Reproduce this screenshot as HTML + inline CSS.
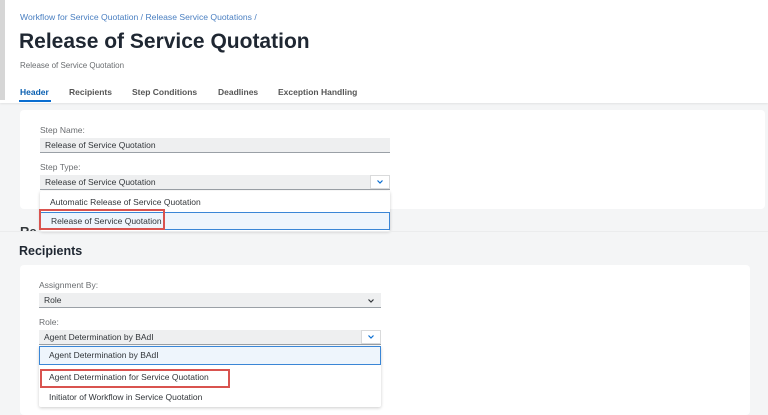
<!DOCTYPE html>
<html><head><style>
*{box-sizing:border-box;margin:0;padding:0}
body{width:768px;height:409px;overflow:hidden;background:#f4f5f6;font-family:"Liberation Sans",sans-serif;position:relative;color:#32363a}
.a{position:absolute}
.lbl{font-size:8.5px;color:#6a6d70;line-height:10px}
.inp{background:#eeeff0;border-bottom:1px solid #9aa0a6;font-size:8.5px;padding-left:5px;line-height:15px;color:#32363a}
.chev{position:absolute;right:0;top:0;width:20px;height:100%;background:#fff;border:1px solid #d9dadb}
.chev svg,.ch svg{position:absolute;left:50%;top:50%;margin:-2px 0 0 -3px}
.item{font-size:8.5px;color:#32363a;position:absolute;left:0;right:0;padding-left:10px}
.red{position:absolute;z-index:5;box-shadow:inset 0 0 0 2px #d9534f;background:transparent}
</style></head><body>
<div class="a" style="left:0;top:0;width:768px;height:103px;background:#fff;box-shadow:0 1px 2px rgba(0,0,0,.08)"></div>
<div class="a" style="left:0;top:0;width:5px;height:100px;background:#d6d6d6"></div>
<div class="a" style="left:20px;top:12px;font-size:8.6px;color:#4a7fc1">Workflow for Service Quotation / Release Service Quotations /</div>
<div class="a" style="left:19px;top:30px;font-size:21px;font-weight:bold;color:#1f2732">Release of Service Quotation</div>
<div class="a" style="left:20px;top:61px;font-size:8px;color:#6a6d70">Release of Service Quotation</div>
<div class="a" style="left:20px;top:87px;font-size:8.5px;font-weight:bold;color:#555">
<span class="a" style="left:0;color:#0a5fb0">Header</span><span class="a" style="left:49px;white-space:nowrap">Recipients</span><span class="a" style="left:112px;white-space:nowrap">Step Conditions</span><span class="a" style="left:198px">Deadlines</span><span class="a" style="left:258px;white-space:nowrap">Exception Handling</span></div>
<div class="a" style="left:19px;top:100px;width:32px;height:2px;background:#0a6ed1"></div>

<div class="a" style="left:20px;top:110px;width:745px;height:99px;background:#fff;border-radius:4px"></div>
<div class="a lbl" style="left:40px;top:125px">Step Name:</div>
<div class="a inp" style="left:40px;top:138px;width:350px;height:15px">Release of Service Quotation</div>
<div class="a lbl" style="left:40px;top:162px">Step Type:</div>
<div class="a inp" style="left:40px;top:175px;width:350px;height:15px">Release of Service Quotation<div class="chev"><svg width="6" height="4"><path d="M0.5 0.5L3 3L5.5 0.5" stroke="#0a6ed1" fill="none" stroke-width="1.2"/></svg></div></div>
<div class="a" style="left:40px;top:191px;width:350px;height:40px;background:#fff;box-shadow:0 1px 3px rgba(0,0,0,.2);border-radius:2px">
<div class="item" style="top:6px">Automatic Release of Service Quotation</div>
<div class="item" style="top:21px;height:18px;line-height:16px;border:1px solid #3a86d6;background:#eef5fc">Release of Service Quotation</div>
</div>
<div class="red" style="left:39px;top:209px;width:126px;height:21px"></div>
<div class="a" style="left:20px;top:224px;font-size:13px;font-weight:bold;color:#32363a;height:7px;overflow:hidden">Re</div>
<div class="a" style="left:0;top:231px;width:768px;height:1px;background:#ebeced"></div>

<div class="a" style="left:19px;top:244px;font-size:12.5px;font-weight:bold;color:#1f2732">Recipients</div>
<div class="a" style="left:20px;top:265px;width:730px;height:150px;background:#fff;border-radius:4px"></div>
<div class="a lbl" style="left:39px;top:280px">Assignment By:</div>
<div class="a inp" style="left:39px;top:293px;width:342px;height:15px">Role<span class="ch" style="position:absolute;right:0;top:0;width:20px;height:15px"><svg width="6" height="4"><path d="M0.5 0.5L3 3L5.5 0.5" stroke="#32363a" fill="none" stroke-width="1.2"/></svg></span></div>
<div class="a lbl" style="left:39px;top:317px">Role:</div>
<div class="a inp" style="left:39px;top:330px;width:342px;height:15px">Agent Determination by BAdI<div class="chev"><svg width="6" height="4"><path d="M0.5 0.5L3 3L5.5 0.5" stroke="#0a6ed1" fill="none" stroke-width="1.2"/></svg></div></div>
<div class="a" style="left:39px;top:346px;width:342px;height:61px;background:#fff;box-shadow:0 1px 3px rgba(0,0,0,.2);border-radius:2px">
<div class="item" style="top:0;height:19px;line-height:17px;border:1.5px solid #3a86d6;background:#eef5fc;padding-left:9px">Agent Determination by BAdI</div>
<div class="item" style="top:26px">Agent Determination for Service Quotation</div>
<div class="item" style="top:46px">Initiator of Workflow in Service Quotation</div>
</div>
<div class="red" style="left:40px;top:369px;width:190px;height:19px"></div>
</body></html>
